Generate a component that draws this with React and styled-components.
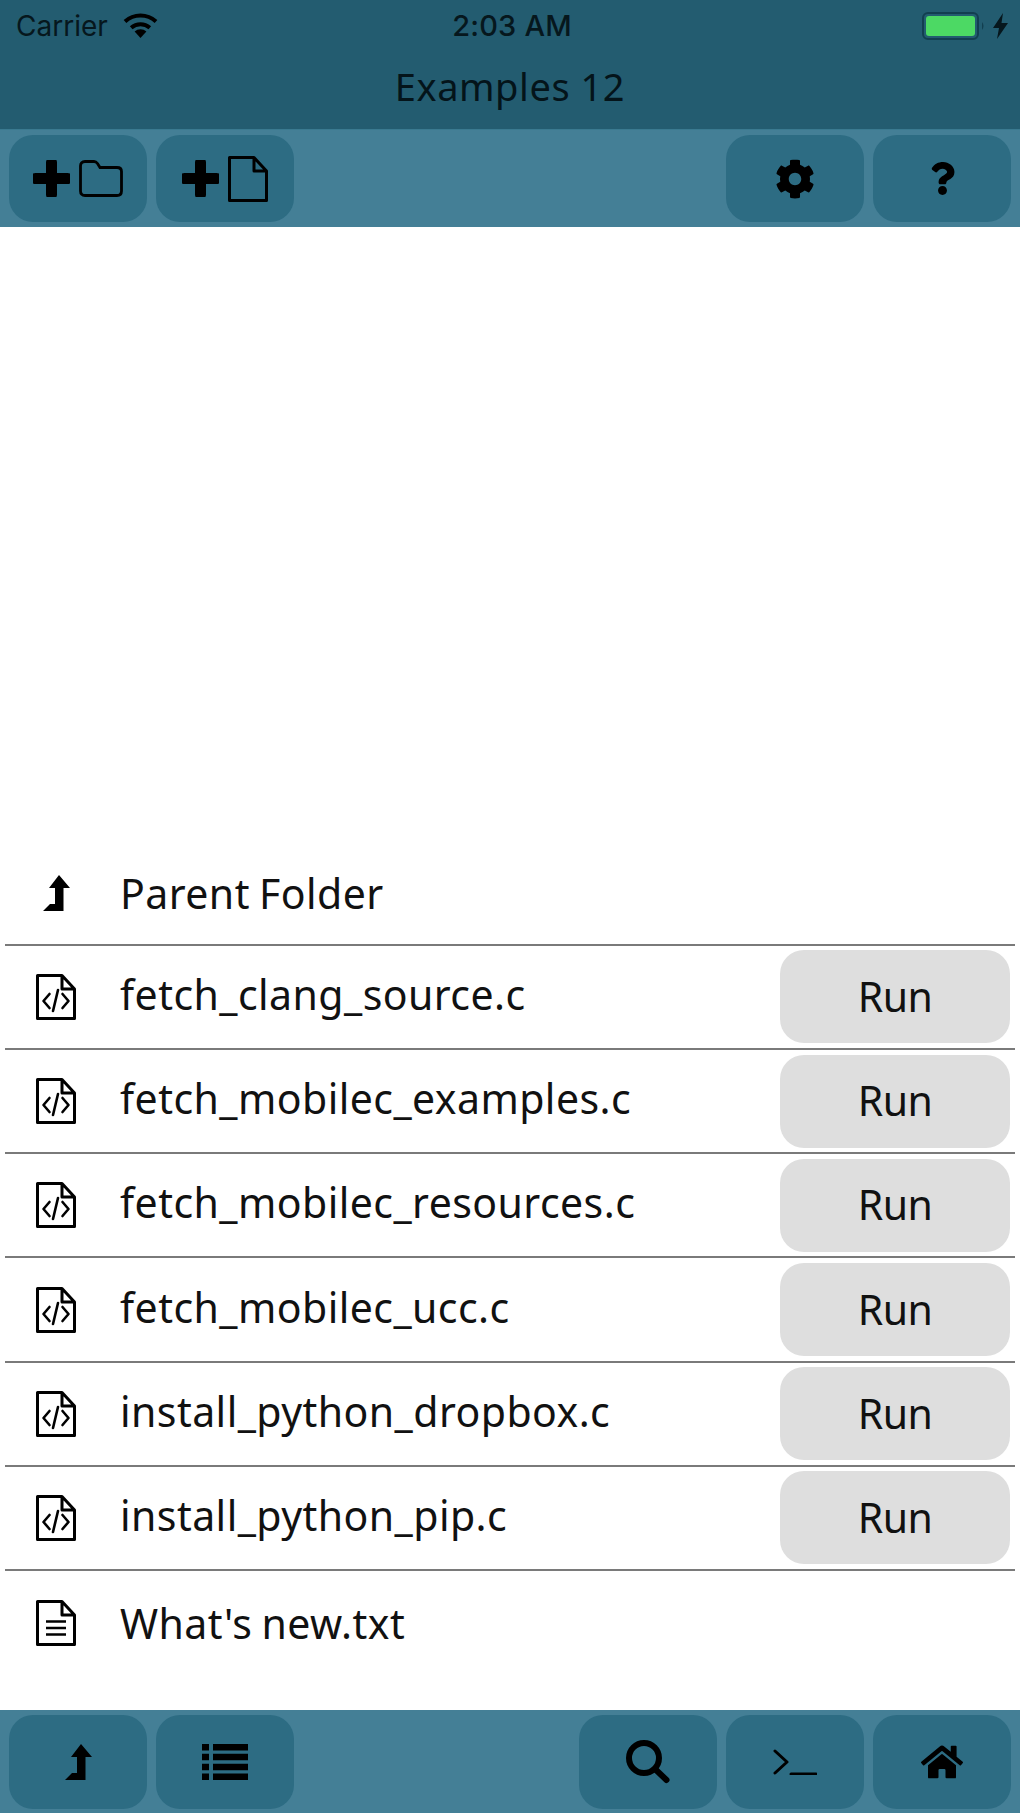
import React from "react";
import styled, { createGlobalStyle } from "styled-components";
import { FaCog, FaHome, FaQuestion } from "react-icons/fa";

const Global = createGlobalStyle`
  html, body { margin: 0; padding: 0; background: #fff; }
  #root { width: 1020px; height: 1813px; }
`;

const Page = styled.div`
  width: 1020px;
  height: 1813px;
  display: flex;
  flex-direction: column;
  overflow: hidden;
  background: #fff;
  color: #000;
  font-family: "Noto Sans", "Open Sans", sans-serif;
`;

const Header = styled.header`
  height: 129px;
  flex: none;
  background: #235c70;
  border-bottom: 1px solid #3a7a90;
  display: flex;
  flex-direction: column;
`;

const StatusBar = styled.div`
  height: 51px;
  padding: 0 12px 0 16px;
  display: grid;
  grid-template-columns: 1fr auto 1fr;
  align-items: center;
  font-family: "Inter", "Roboto", sans-serif;
  font-size: 28px;
  color: #06171d;
`;

const StatusLeft = styled.div`
  display: flex;
  align-items: center;
  gap: 15px;
  font-weight: 400;
`;

const StatusTime = styled.div`
  font-weight: 500;
  font-size: 29px;
  letter-spacing: 0.2px;
`;

const StatusRight = styled.div`
  display: flex;
  align-items: center;
  justify-content: flex-end;
  gap: 7px;
`;

const Title = styled.div`
  text-align: center;
  font-size: 38px;
  line-height: 50px;
  margin-top: 10px;
  letter-spacing: 0.55px;
  color: #04141a;
`;

const Toolbar = styled.div`
  flex: none;
  height: ${(p) => p.$height}px;
  background: #447f96;
  padding: 5px 9px 0;
  box-sizing: border-box;
  display: flex;
  justify-content: space-between;
`;

const ButtonGroup = styled.div`
  display: flex;
  gap: 9px;
`;

const ToolButton = styled.div`
  width: 138px;
  height: ${(p) => p.$height}px;
  border-radius: 24px;
  background: #2d6c83;
  display: flex;
  align-items: center;
  justify-content: center;
  gap: ${(p) => p.$gap || 0}px;
`;

const List = styled.main`
  flex: 1;
  display: flex;
  flex-direction: column;
  justify-content: flex-end;
  padding: 0 5px 35px;
`;

const Row = styled.div`
  height: ${(p) => (p.$last ? 104 : 102.2)}px;
  display: flex;
  align-items: center;
  border-bottom: ${(p) => (p.$last ? "none" : "2px solid #7a7a7a")};
`;

const IconCell = styled.div`
  width: 115px;
  flex: none;
  padding-left: ${(p) => p.$inset}px;
  box-sizing: border-box;
  display: flex;
  align-items: center;
`;

const RowName = styled.div`
  flex: 1;
  font-size: 41px;
  line-height: 50px;
  letter-spacing: 0.45px;
  word-spacing: -2px;
  color: #111;
  padding-bottom: ${(p) => p.$lift}px;
  white-space: nowrap;
`;

const RunButton = styled.div`
  width: 230px;
  height: 93px;
  margin-right: 5px;
  border-radius: 24px;
  background: #dedede;
  display: flex;
  align-items: center;
  justify-content: center;
  font-size: 41px;
  letter-spacing: -0.5px;
  padding-bottom: 2px;
  box-sizing: border-box;
  color: #111;
`;

const Wifi = () => (
  <svg width="35" height="25" viewBox="0 0 35 25">
    <path d="M17.5 25 L11.6 18.4 A9 9 0 0 1 23.4 18.4 Z" fill="#000" />
    <path d="M8.2 14.8 A14 14 0 0 1 26.8 14.8" fill="none" stroke="#000" strokeWidth="4" />
    <path d="M2 8.6 A23 23 0 0 1 33 8.6" fill="none" stroke="#000" strokeWidth="4" />
  </svg>
);

const Battery = () => (
  <svg width="64" height="28" viewBox="0 0 64 28">
    <rect x="1" y="1" width="55" height="26" rx="5" fill="none" stroke="#123f50" strokeWidth="2" />
    <rect x="4" y="4" width="49" height="20" rx="3" fill="#4cd964" />
    <path d="M60 10 Q63 14 60 18 Z" fill="#123f50" />
  </svg>
);

const Bolt = () => (
  <svg width="15" height="26" viewBox="0 0 15 26">
    <path d="M10 0 L0 15 H6 L4 26 L15 10 H8.5 Z" fill="#06171d" />
  </svg>
);

const PlusIcon = () => (
  <svg width="37" height="37" viewBox="0 0 37 37">
    <path
      d="M18.5 2.5 V34.5 M2.5 18.5 H34.5"
      fill="none"
      stroke="#000"
      strokeWidth="11"
      strokeLinecap="round"
      strokeLinejoin="round"
    />
    <path d="M13 2 H24 V13 H35 V24 H24 V35 H13 V24 H2 V13 H13 Z" fill="#000" />
  </svg>
);

const FolderOutline = () => (
  <svg width="44" height="37" viewBox="0 0 44 37">
    <path
      d="M1.5 6 Q1.5 1.5 6 1.5 H15 Q17 1.5 18.5 3.5 L21 7.5 H38 Q42.5 7.5 42.5 11.5 V31 Q42.5 35.5 38 35.5 H6 Q1.5 35.5 1.5 31 Z"
      fill="none"
      stroke="#000"
      strokeWidth="2.8"
    />
  </svg>
);

const PageOutline = ({ children }) => (
  <svg width="40" height="46" viewBox="0 0 40 46">
    <path
      d="M1.5 1.5 H26 L38.5 15 V44.5 H1.5 Z M26 1.5 V15 H38.5"
      fill="none"
      stroke="#000"
      strokeWidth="3"
      strokeLinejoin="round"
    />
    {children}
  </svg>
);

const CodeMarks = () => (
  <path
    d="M13.5 20 L7.5 27 L13.5 34 M26.5 20 L32.5 27 L26.5 34 M22 16 L17 37"
    fill="none"
    stroke="#000"
    strokeWidth="2.6"
    strokeLinecap="round"
    strokeLinejoin="round"
  />
);

const TextMarks = () => (
  <path d="M10 21.5 H30 M10 28 H30 M10 34.5 H30" fill="none" stroke="#000" strokeWidth="2.6" />
);

const LevelUp = () => (
  <svg width="27" height="36" viewBox="0 0 27 36">
    <path d="M16 0 L27 13 H20.5 V36 H0 L7 29 H12 V13 H6 Z" fill="#000" strokeLinejoin="round" />
  </svg>
);

const ListIcon = () => (
  <svg width="46" height="36" viewBox="0 0 46 36">
    <path
      d="M0 0 H7 V6.5 H0 Z M11 0 H46 V6.5 H11 Z M0 9.8 H7 V16.3 H0 Z M11 9.8 H46 V16.3 H11 Z M0 19.7 H7 V26.2 H0 Z M11 19.7 H46 V26.2 H11 Z M0 29.5 H7 V36 H0 Z M11 29.5 H46 V36 H11 Z"
      fill="#000"
    />
  </svg>
);

const SearchIcon = () => (
  <svg width="44" height="44" viewBox="0 0 44 44">
    <circle cx="18" cy="18" r="15" fill="none" stroke="#000" strokeWidth="6" />
    <path d="M29 29 L40.5 40" stroke="#000" strokeWidth="6" strokeLinecap="round" />
  </svg>
);

const TerminalIcon = () => (
  <svg width="44" height="26" viewBox="0 0 44 26">
    <path d="M2 2 L14 13 L2 24" fill="none" stroke="#000" strokeWidth="3" strokeLinecap="round" strokeLinejoin="round" />
    <path d="M18 25 H43" stroke="#000" strokeWidth="3" strokeLinecap="round" />
  </svg>
);

const files = [
  "fetch_clang_source.c",
  "fetch_mobilec_examples.c",
  "fetch_mobilec_resources.c",
  "fetch_mobilec_ucc.c",
  "install_python_dropbox.c",
  "install_python_pip.c",
];

export default function App() {
  return (
    <Page>
      <Global />
      <Header>
        <StatusBar>
          <StatusLeft>
            Carrier
            <Wifi />
          </StatusLeft>
          <StatusTime>2:03 AM</StatusTime>
          <StatusRight>
            <Battery />
            <Bolt />
          </StatusRight>
        </StatusBar>
        <Title>Examples 12</Title>
      </Header>
      <Toolbar $height={97}>
        <ButtonGroup>
          <ToolButton $height={87} $gap={9}>
            <PlusIcon />
            <FolderOutline />
          </ToolButton>
          <ToolButton $height={87} $gap={9}>
            <PlusIcon />
            <PageOutline />
          </ToolButton>
        </ButtonGroup>
        <ButtonGroup>
          <ToolButton $height={87}>
            <FaCog size={40} />
          </ToolButton>
          <ToolButton $height={87}>
            <FaQuestion size={33} />
          </ToolButton>
        </ButtonGroup>
      </Toolbar>
      <List>
        <Row>
          <IconCell $inset={38}>
            <LevelUp />
          </IconCell>
          <RowName $lift={0}>Parent Folder</RowName>
        </Row>
        {files.map((f) => (
          <Row key={f}>
            <IconCell $inset={31}>
              <PageOutline>
                <CodeMarks />
              </PageOutline>
            </IconCell>
            <RowName $lift={6}>{f}</RowName>
            <RunButton>Run</RunButton>
          </Row>
        ))}
        <Row $last>
          <IconCell $inset={31}>
            <PageOutline>
              <TextMarks />
            </PageOutline>
          </IconCell>
          <RowName $lift={0}>What's new.txt</RowName>
        </Row>
      </List>
      <Toolbar $height={103}>
        <ButtonGroup>
          <ToolButton $height={94}>
            <LevelUp />
          </ToolButton>
          <ToolButton $height={94}>
            <ListIcon />
          </ToolButton>
        </ButtonGroup>
        <ButtonGroup>
          <ToolButton $height={94}>
            <SearchIcon />
          </ToolButton>
          <ToolButton $height={94}>
            <TerminalIcon />
          </ToolButton>
          <ToolButton $height={94}>
            <FaHome size={42} />
          </ToolButton>
        </ButtonGroup>
      </Toolbar>
    </Page>
  );
}
